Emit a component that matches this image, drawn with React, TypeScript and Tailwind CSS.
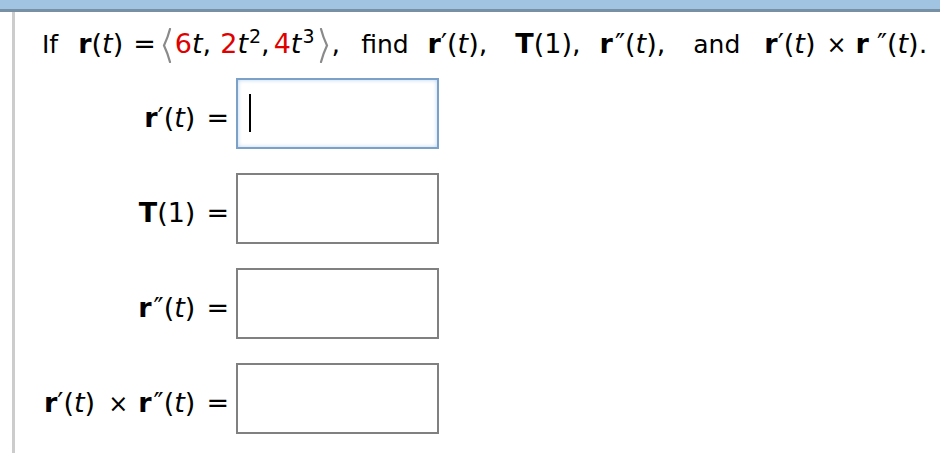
import React from "react";

const Bracket = ({ right = false, cls = "" }: { right?: boolean; cls?: string }) => (
  <svg
    width="10"
    height="35"
    viewBox="0 0 10 35"
    className={"inline-block " + cls}
    style={{ verticalAlign: "-10px" }}
  >
    <path
      d={right ? "M2 1 Q4 9 8 17.5 Q4 26 2 34" : "M8 1 Q6 9 2 17.5 Q6 26 8 34"}
      fill="none"
      stroke="#8a8a8a"
      strokeWidth="2.2"
      strokeLinecap="round"
    />
  </svg>
);

const B = ({ children }: { children: React.ReactNode }) => <span className="font-bold">{children}</span>;
const I = ({ children }: { children: React.ReactNode }) => <span className="italic">{children}</span>;
const R = ({ children }: { children: React.ReactNode }) => <span className="text-[#e00000]">{children}</span>;
const Sup = ({ children }: { children: React.ReactNode }) => (
  <sup className="text-[19px] top-[-0.55em] ml-[1px]">{children}</sup>
);
const P2 = () => <span className="ml-[2px]">″</span>;

function Row({ label, focused = false }: { label: React.ReactNode; focused?: boolean }) {
  return (
    <div className="flex gap-[7px]">
      <div className="w-[214px] flex justify-end items-baseline pt-[24px] whitespace-nowrap">{label}</div>
      {focused ? (
        <div className="w-[203px] h-[71px] border-2 border-[#7ba1c8] bg-white shadow-[inset_0_0_4px_#b8d2ee] relative">
          <div className="absolute left-[11px] top-[14px] w-[2px] h-[38px] bg-black" />
        </div>
      ) : (
        <div className="w-[203px] h-[71px] border-2 border-[#808080] bg-white" />
      )}
    </div>
  );
}

const Eq = () => <span className="ml-[11px]">=</span>;

export default function App() {
  return (
    <div
      className="w-[940px] h-[453px] bg-white overflow-hidden text-black text-[27px] leading-[32px]"
      style={{ fontFamily: '"DejaVu Sans", Verdana, sans-serif' }}
    >
      <div className="h-[9px] bg-[#a0c4e2]" />
      <div className="h-[3px] bg-[#7890a4]" />
      <div className="ml-[12px] h-[441px] border-l-[3px] border-[#cccccc]">
        <div className="pt-[16px] pl-[27px]">
          <div className="h-[32px] whitespace-nowrap">
            <span className="text-[25px]">If</span>
            <span className="ml-[20px]">
              <B>r</B>(<I>t</I>)
            </span>
            <span className="ml-[10px]">=</span>
            <Bracket cls="ml-[6px]" />
            <span className="ml-[3px]">
              <R>6</R>
              <I>t</I>,
            </span>
            <span className="ml-[9px]">
              <R>2</R>
              <I>t</I>
              <Sup>2</Sup>,
            </span>
            <span className="ml-[4px]">
              <R>4</R>
              <I>t</I>
              <Sup>3</Sup>
            </span>
            <Bracket right cls="ml-[4px]" />
            <span className="ml-[3px]">,</span>
            <span className="ml-[21px] text-[25px]">find</span>
            <span className="ml-[19px]">
              <B>r</B>′(<I>t</I>),
            </span>
            <span className="ml-[28px]">
              <B>T</B>(1),
            </span>
            <span className="ml-[19px]">
              <B>r</B>
              <P2 />(<I>t</I>),
            </span>
            <span className="ml-[28px] text-[25px]">and</span>
            <span className="ml-[24px]">
              <B>r</B>′(<I>t</I>)
            </span>
            <span className="ml-[11px] text-[24px]">×</span>
            <span className="ml-[9px]">
              <B>r</B>
            </span>
            <span className="ml-[8px]">
              ″(<I>t</I>).
            </span>
          </div>
        </div>
        <div className="mt-[18px] flex flex-col gap-[24px]">
          <Row
            focused
            label={
              <>
                <B>r</B>′(<I>t</I>)
                <Eq />
              </>
            }
          />
          <Row
            label={
              <>
                <B>T</B>(1)
                <Eq />
              </>
            }
          />
          <Row
            label={
              <>
                <B>r</B>
                <P2 />(<I>t</I>)
                <Eq />
              </>
            }
          />
          <Row
            label={
              <>
                <B>r</B>′(<I>t</I>)<span className="ml-[13px] text-[24px]">×</span>
                <span className="ml-[10px]">
                  <B>r</B>
                  <P2 />(<I>t</I>)
                </span>
                <Eq />
              </>
            }
          />
        </div>
      </div>
    </div>
  );
}
